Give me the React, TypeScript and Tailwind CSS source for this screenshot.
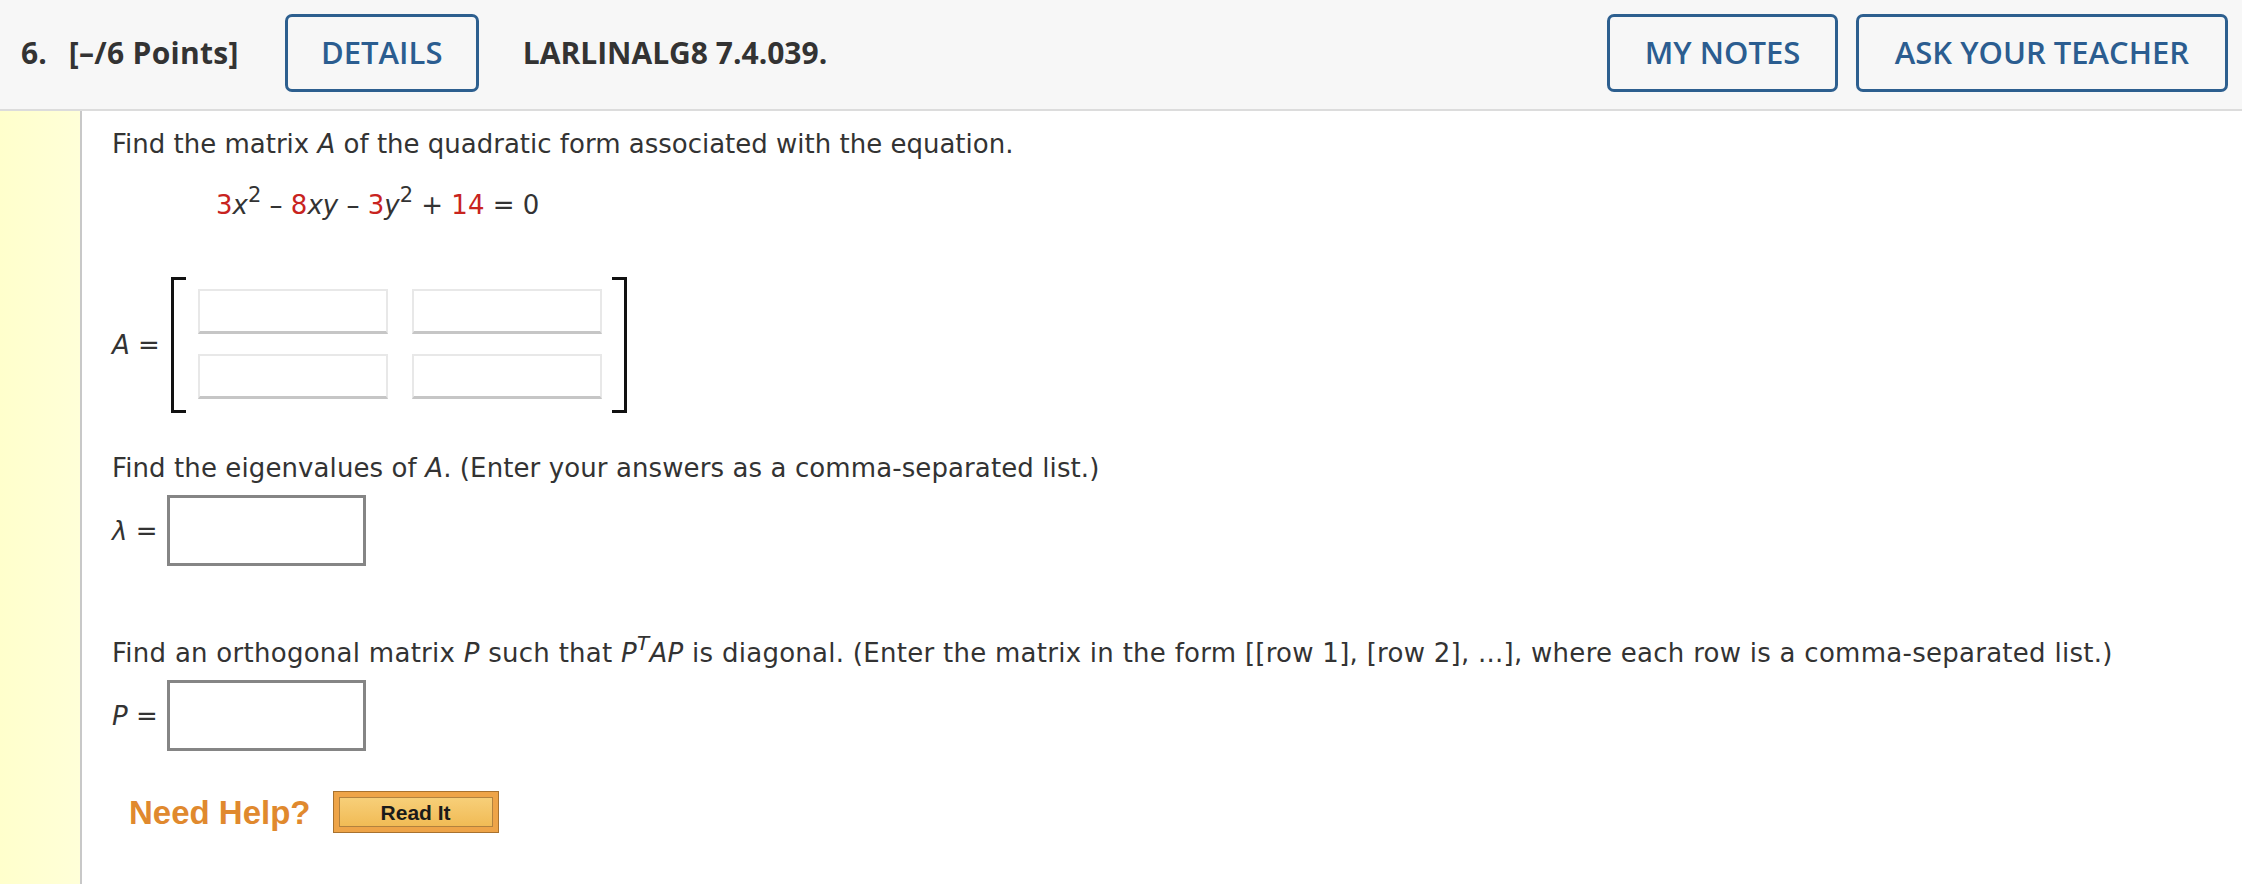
import React from 'react';

const headerFont = { fontFamily: '"Open Sans", "Liberation Sans", sans-serif' };

// Outlined blue header button
const HeaderButton: React.FC<{ label: string; width: string }> = ({ label, width }) => (
  <button
    type="button"
    className={`${width} h-[78px] rounded-[7px] border-[3px] border-[#2d5f8f] bg-[#f7f7f7] text-[#2b5d90] text-[31px] font-semibold flex items-center justify-center`}
    style={headerFont}
  >
    {label}
  </button>
);

const MatrixCell: React.FC = () => (
  <input
    type="text"
    className="w-[190px] h-[45px] bg-white border-2 border-[#e8e8e8] border-b-[3px] border-b-[#c6c6c6] outline-none"
  />
);

const AnswerBox: React.FC = () => (
  <input
    type="text"
    className="w-[199px] h-[71px] bg-white border-[3px] border-[#858585] outline-none"
  />
);

export default function App() {
  return (
    <div
      className="w-full h-[884px] bg-white text-[#333] text-[26px] overflow-hidden flex flex-col"
      style={{ fontFamily: '"DejaVu Sans", Verdana, sans-serif' }}
    >
      {/* question header */}
      <div className="h-[111px] shrink-0 bg-[#f7f7f7] border-b-2 border-[#dcdcdc] flex items-center pl-[21px] pr-[14px] pb-[4px]">
        <div className="flex items-center text-[30px] font-bold text-[#333]" style={headerFont}>
          <span>6.</span>
          <span className="ml-[22px] tracking-[0.3px]">[–/6 Points]</span>
        </div>
        <div className="ml-[46px]">
          <HeaderButton label="DETAILS" width="w-[194px]" />
        </div>
        <div className="ml-[44px] text-[30px] font-bold text-[#333]" style={headerFont}>
          LARLINALG8 7.4.039.
        </div>
        <div className="ml-auto flex gap-[18px]">
          <HeaderButton label="MY NOTES" width="w-[231px]" />
          <HeaderButton label="ASK YOUR TEACHER" width="w-[372px]" />
        </div>
      </div>

      <div className="flex flex-1">
        <div className="w-[82px] shrink-0 bg-gradient-to-r from-[#ffffcc] to-[#ffffd8] border-r-2 border-[#c8c8c8]" />

        <div className="flex-1 pl-[30px] pt-[15px] leading-[36px]">
          <div>
            Find the matrix <i>A</i> of the quadratic form associated with the equation.
          </div>

          <div className="mt-[25px] ml-[104px]">
            <span className="text-[#c8231e]">3</span>
            <i>x</i>
            <sup className="text-[21px] top-[-0.55em]">2</sup> – <span className="text-[#c8231e]">8</span>
            <i>xy</i> – <span className="text-[#c8231e]">3</span>
            <i>y</i>
            <sup className="text-[21px] top-[-0.55em]">2</sup> + <span className="text-[#c8231e]">14</span> = 0
          </div>

          {/* matrix A */}
          <div className="mt-[54px] flex items-center">
            <span>
              <i>A</i> =
            </span>
            <div className="ml-[11px] flex">
              <div className="w-[15px] border-l-[3px] border-y-[3px] border-[#111]" />
              <div className="grid grid-cols-2 gap-x-[24px] gap-y-[20px] pt-[12px] pb-[14px] pl-[12px] pr-[10px]">
                <MatrixCell />
                <MatrixCell />
                <MatrixCell />
                <MatrixCell />
              </div>
              <div className="w-[15px] border-r-[3px] border-y-[3px] border-[#111]" />
            </div>
          </div>

          <div className="mt-[37px] tracking-[0.1px]">
            Find the eigenvalues of <i>A</i>. (Enter your answers as a comma-separated list.)
          </div>
          <div className="mt-[9px] flex items-center">
            <span className="w-[55px]">
              <i>λ</i> =
            </span>
            <AnswerBox />
          </div>

          <div className="mt-[69px] tracking-[0.27px]">
            Find an orthogonal matrix <i>P</i> such that <i>P</i>
            <sup className="text-[20px] top-[-0.6em]">
              <i>T</i>
            </sup>
            <i>AP</i> is diagonal. (Enter the matrix in the form [[row 1], [row 2], ...], where each row is a
            comma-separated list.)
          </div>
          <div className="mt-[9px] flex items-center">
            <span className="w-[55px]">
              <i>P</i> =
            </span>
            <AnswerBox />
          </div>

          {/* help */}
          <div className="mt-[40px] ml-[17px] flex items-center" style={{ fontFamily: '"Liberation Sans", Arial, sans-serif' }}>
            <span className="text-[33px] font-bold text-[#e0892e] leading-none">Need Help?</span>
            <button
              type="button"
              className="ml-[22px] w-[166px] h-[42px] border border-[#a8722f] bg-[#eea448] p-[5px] flex"
            >
              <span className="flex-1 flex items-center justify-center border border-[#b2823e] bg-gradient-to-b from-[#f7cf78] to-[#f1bb55] text-[21px] font-bold text-[#1a1a1a] leading-none">
                Read It
              </span>
            </button>
          </div>
        </div>
      </div>
    </div>
  );
}
